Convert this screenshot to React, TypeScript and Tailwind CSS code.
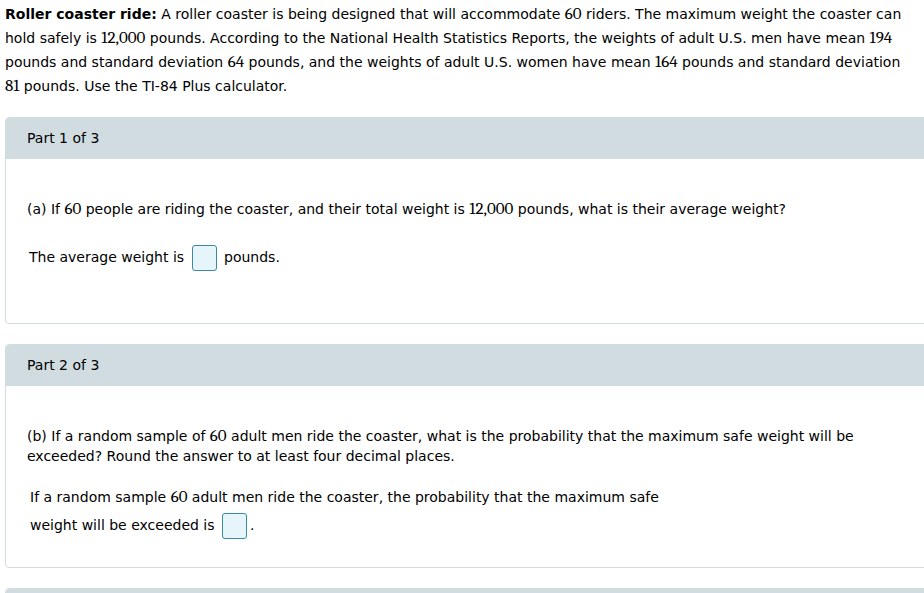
import React from 'react';

// serif digits, sized on an inner span
const Num = ({ v }: { v: string }) => (
	<span className="font-serif leading-none">
		<span className="text-[17px] leading-none">{v}</span>
	</span>
);

const AnswerBox = () => (
	<span className="inline-block align-middle w-[25px] h-[26px] mx-[3px] rounded-[3px] border border-[#3a8aa6] bg-[#e6f5fa]" />
);

const PartCard = ({ title, children }: { title: string; children: React.ReactNode }) => (
	<section className="ml-[5px] rounded-[4px] border border-[#d3dcdf] overflow-hidden">
		<header className="h-[41px] bg-[#d1dce1] pl-[21px] flex items-center">{title}</header>
		{children}
	</section>
);

const App = () => {
	return (
		<div className="w-[924px] h-[593px] overflow-hidden bg-white text-[14px] text-black font-[DejaVu_Sans,Verdana,sans-serif]">
			<p className="w-[913px] pl-[5px] pt-[2px] leading-[24px]">
				<b>Roller coaster ride:</b> A roller coaster is being designed that will accommodate <Num v="60" /> riders.
				The maximum weight the coaster can hold safely is <Num v="12,000" /> pounds. According to the National
				Health Statistics Reports, the weights of adult U.S. men have mean <Num v="194" /> pounds and standard
				deviation <Num v="64" /> pounds, and the weights of adult U.S. women have mean <Num v="164" /> pounds and
				standard deviation <Num v="81" /> pounds. Use the TI-84 Plus calculator.
			</p>

			<div className="mt-[19px] w-[940px] space-y-[20px]">
				<PartCard title="Part 1 of 3">
					<div className="pl-[21px] pt-[38px] h-[164px]">
						<p className="leading-[24px]">
							(a) If <Num v="60" /> people are riding the coaster, and their total weight is <Num v="12,000" />{' '}
							pounds, what is their average weight?
						</p>
						<p className="mt-[22px] pl-[2px] leading-[28px]">
							The average weight is <AnswerBox /> pounds.
						</p>
					</div>
				</PartCard>

				<PartCard title="Part 2 of 3">
					<div className="pl-[21px] pt-[40px] h-[181px]">
						<p className="leading-[20px] w-[860px]">
							(b) If a random sample of <Num v="60" /> adult men ride the coaster, what is the probability that
							the maximum safe weight will be exceeded? Round the answer to at least four decimal places.
						</p>
						<p className="mt-[17px] pl-[3px] leading-[28px] w-[660px]">
							If a random sample <Num v="60" /> adult men ride the coaster, the probability that the maximum
							safe weight will be exceeded is <AnswerBox />.
						</p>
					</div>
				</PartCard>

				<PartCard title="Part 3 of 3">
					<div className="h-[40px]" />
				</PartCard>
			</div>
		</div>
	);
};

export default App;
